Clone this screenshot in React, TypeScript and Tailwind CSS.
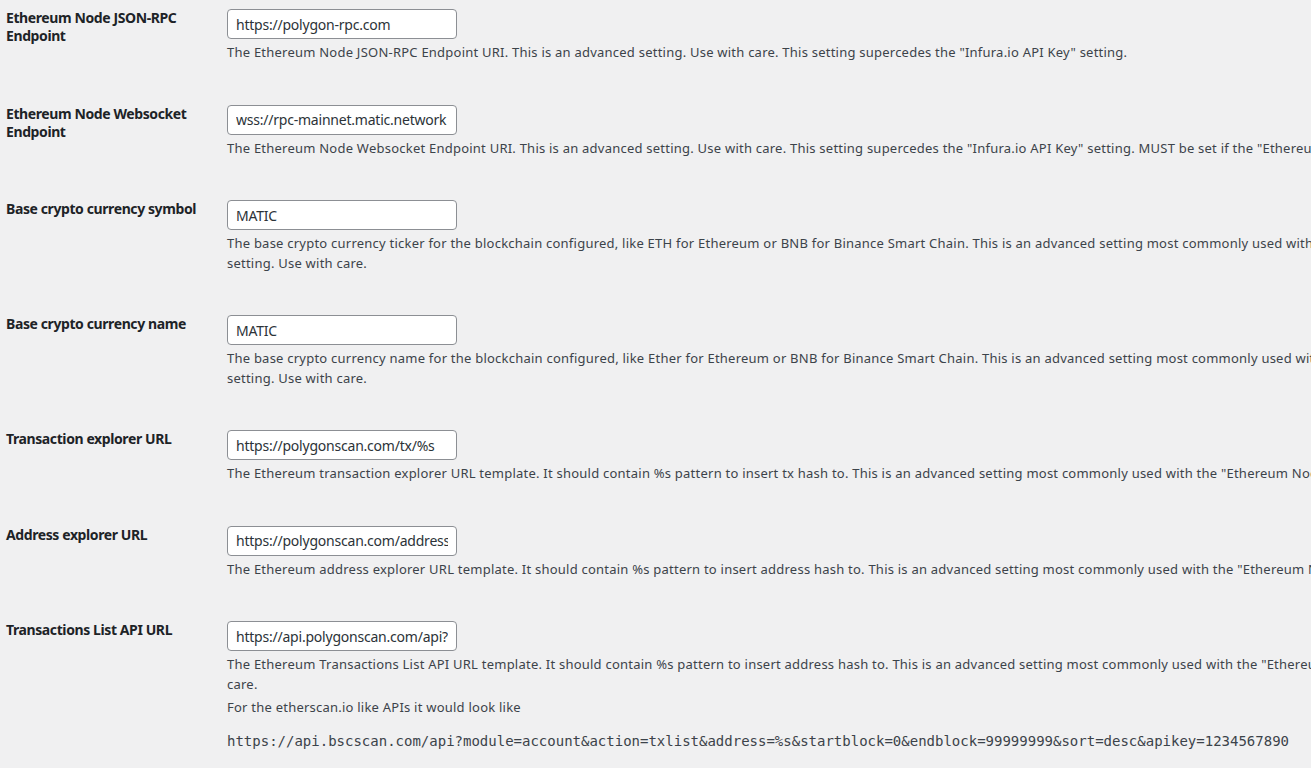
import React from "react";

type Row = {
  label: React.ReactNode;
  value: string;
  desc: string[];
  extra?: React.ReactNode;
};

const rows: Row[] = [
  {
    label: (
      <>
        Ethereum Node JSON-RPC
        <br />
        Endpoint
      </>
    ),
    value: "https://polygon-rpc.com",
    desc: [
      'The Ethereum Node JSON-RPC Endpoint URI. This is an advanced setting. Use with care. This setting supercedes the "Infura.io API Key" setting.',
    ],
  },
  {
    label: (
      <>
        Ethereum Node Websocket
        <br />
        Endpoint
      </>
    ),
    value: "wss://rpc-mainnet.matic.network",
    desc: [
      'The Ethereum Node Websocket Endpoint URI. This is an advanced setting. Use with care. This setting supercedes the "Infura.io API Key" setting. MUST be set if the "Ethereum Node JSON-RPC Endpoint" setting is set.',
    ],
  },
  {
    label: "Base crypto currency symbol",
    value: "MATIC",
    desc: [
      'The base crypto currency ticker for the blockchain configured, like ETH for Ethereum or BNB for Binance Smart Chain. This is an advanced setting most commonly used with the "Ethereum Node JSON-RPC Endpoint"',
      "setting. Use with care.",
    ],
  },
  {
    label: "Base crypto currency name",
    value: "MATIC",
    desc: [
      'The base crypto currency name for the blockchain configured, like Ether for Ethereum or BNB for Binance Smart Chain. This is an advanced setting most commonly used with the "Ethereum Node JSON-RPC Endpoint"',
      "setting. Use with care.",
    ],
  },
  {
    label: "Transaction explorer URL",
    value: "https://polygonscan.com/tx/%s",
    desc: [
      'The Ethereum transaction explorer URL template. It should contain %s pattern to insert tx hash to. This is an advanced setting most commonly used with the "Ethereum Node JSON-RPC Endpoint" setting. Use with care.',
    ],
  },
  {
    label: "Address explorer URL",
    value: "https://polygonscan.com/address/%s",
    desc: [
      'The Ethereum address explorer URL template. It should contain %s pattern to insert address hash to. This is an advanced setting most commonly used with the "Ethereum Node JSON-RPC Endpoint" setting. Use with care.',
    ],
  },
  {
    label: "Transactions List API URL",
    value:
      "https://api.polygonscan.com/api?module=account&action=txlist&address=%s&startblock=0&endblock=99999999&sort=desc",
    desc: [
      'The Ethereum Transactions List API URL template. It should contain %s pattern to insert address hash to. This is an advanced setting most commonly used with the "Ethereum Node JSON-RPC Endpoint" setting. Use with',
      "care.",
    ],
    extra: (
      <>
        <p className="mt-[4px] whitespace-nowrap leading-[19.5px]">
          For the etherscan.io like APIs it would look like
        </p>
        <p
          className="mt-[14px] whitespace-nowrap text-[14px] leading-[19.5px] tracking-normal"
          style={{ fontFamily: '"DejaVu Sans Mono", monospace' }}
        >
          https://api.bscscan.com/api?module=account&amp;action=txlist&amp;address=%s&amp;startblock=0&amp;endblock=99999999&amp;sort=desc&amp;apikey=1234567890
        </p>
      </>
    ),
  },
];

export default function App() {
  return (
    <div
      className="h-[768px] w-[1311px] overflow-hidden bg-[#f0f0f1] pt-[9px]"
      style={{ fontFamily: '"Noto Sans", "Open Sans", sans-serif' }}
    >
      {rows.map((r, i) => (
        <div key={i} className="flex pb-[42px]">
          <div className="w-[227px] shrink-0 pl-[6px] whitespace-nowrap text-[14px] font-bold leading-[18px] tracking-[-0.4px] text-[#1d2327]">
            {r.label}
          </div>
          <div className="min-w-0 flex-1 text-[13px] tracking-[0.23px] text-[#3c434a]">
            <input
              readOnly
              value={r.value}
              className="block h-[30px] w-[230px] rounded-[4px] border border-[#8c8f94] bg-white px-[8px] text-[14px] tracking-[-0.22px] text-[#2c3338] outline-none"
            />
            <p className="mt-[4px] leading-[19.5px]">
              {r.desc.map((d, j) => (
                <span key={j} className="block whitespace-nowrap">
                  {d}
                </span>
              ))}
            </p>
            {r.extra}
          </div>
        </div>
      ))}
    </div>
  );
}
